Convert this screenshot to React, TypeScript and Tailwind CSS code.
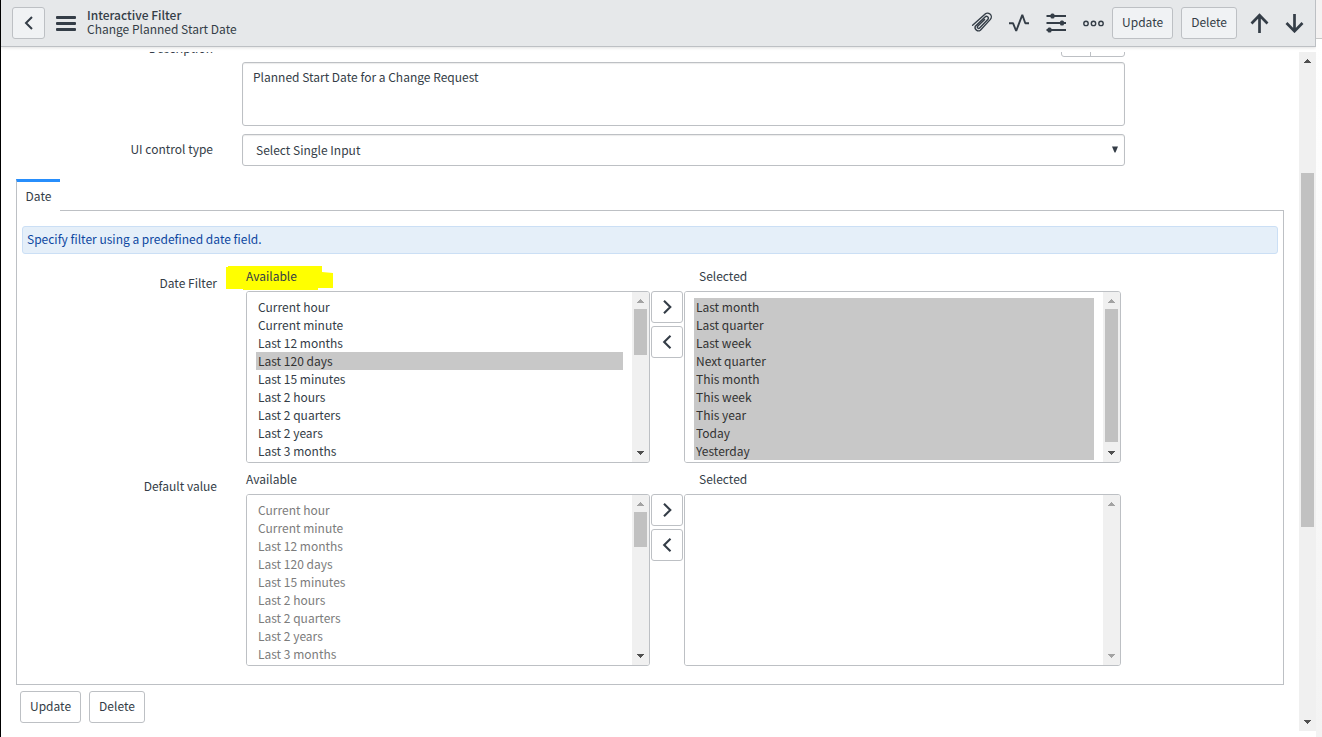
import React from 'react';

const availableDates = [
  'Current hour',
  'Current minute',
  'Last 12 months',
  'Last 120 days',
  'Last 15 minutes',
  'Last 2 hours',
  'Last 2 quarters',
  'Last 2 years',
  'Last 3 months',
];

const selectedDates = [
  'Last month',
  'Last quarter',
  'Last week',
  'Next quarter',
  'This month',
  'This week',
  'This year',
  'Today',
  'Yesterday',
];

interface ScrollbarProps {
  before?: number;
  thumb: number;
  after: number;
  topActive?: boolean;
  bottomActive?: boolean;
}

const Scrollbar: React.FC<ScrollbarProps> = ({ before = 0, thumb, after, topActive = false, bottomActive = true }) => (
  <div className="flex w-[17px] shrink-0 flex-col bg-[#f0f0f0]" aria-hidden="true">
    <svg className="h-[17px] w-[17px] shrink-0" viewBox="0 0 17 17" shapeRendering="crispEdges">
      <path d="M5 11V10H6V9H7V8H8V7H9V8H10V9H11V10H12V11Z" fill={topActive ? '#505050' : '#a3a3a3'} />
    </svg>
    <div style={{ flexGrow: before }} />
    <div className="mx-[2px] bg-[#c1c1c1]" style={{ flexGrow: thumb }} />
    <div style={{ flexGrow: after }} />
    <svg className="h-[17px] w-[17px] shrink-0" viewBox="0 0 17 17" shapeRendering="crispEdges">
      <path d="M5 6H12V7H11V8H10V9H9V10H8V9H7V8H6V7H5Z" fill={bottomActive ? '#505050' : '#a3a3a3'} />
    </svg>
  </div>
);

interface ListBoxProps {
  id: string;
  options: string[];
  selected?: string[];
  muted?: boolean;
  children: React.ReactNode;
}

const ListBox: React.FC<ListBoxProps> = ({ id, options, selected = [], muted = false, children }) => (
  <div className="flex h-[172px] overflow-hidden rounded-[3px] border border-[#bdc0c4] bg-white">
    <select
      id={id}
      multiple
      size={9}
      defaultValue={selected}
      className={`min-w-0 flex-1 overflow-hidden bg-white px-[9px] pt-[6px] outline-none ${
        muted ? 'text-[#7c7c7c]' : 'text-[#343d47]'
      }`}
    >
      {options.map((option) => (
        <option
          key={option}
          value={option}
          className="h-[18px] px-[2px] py-0 leading-4 checked:bg-[linear-gradient(#c8c8c8,#c8c8c8)] checked:[-webkit-text-fill-color:#323232]"
        >
          {option}
        </option>
      ))}
    </select>
    {children}
  </div>
);

const MoveButton: React.FC<{ label: string; direction: 'left' | 'right' }> = ({ label, direction }) => (
  <button
    type="button"
    aria-label={label}
    className="flex h-8 w-8 cursor-pointer items-center justify-center rounded-[3px] border border-[#bdc0c4] bg-white"
  >
    <svg width="10" height="14" viewBox="0 0 10 14" fill="none" stroke="#343d47" strokeWidth="2.1">
      <path d={direction === 'right' ? 'M2 0.8L8.3 7L2 13.2' : 'M8.5 0.8L2.2 7L8.5 13.2'} />
    </svg>
  </button>
);

interface SlushBucketProps {
  id: string;
  label: string;
  highlight?: boolean;
  available: React.ReactNode;
  selected: React.ReactNode;
}

const SlushBucket: React.FC<SlushBucketProps> = ({ id, label, highlight = false, available, selected }) => (
  <div className="flex" role="group" aria-labelledby={`${id}-label`}>
    <div id={`${id}-label`} className="w-[200px] shrink-0 pt-[10px] text-right leading-5">
      {label}
    </div>
    <div className="ml-[29px] mr-[162px] flex min-w-0 flex-1">
      <div className="min-w-0 flex-[404]">
        <div className="relative h-[28px] pt-[3px] leading-5">
          {highlight && (
            <svg className="absolute -left-5 top-[3px]" width="107" height="24" viewBox="0 0 107 24" aria-hidden="true">
              <path d="M0 1H2V0H96V6L107 7V22H92V24H17V23H0Z" fill="#ffff00" />
            </svg>
          )}
          <label htmlFor={`${id}-available`} className="relative">
            Available
          </label>
        </div>
        {available}
      </div>
      <div className="mx-px flex shrink-0 flex-col gap-[3px] pt-[28px]">
        <MoveButton label="Add" direction="right" />
        <MoveButton label="Remove" direction="left" />
      </div>
      <div className="min-w-0 flex-[437]">
        <div className="h-[28px] pl-[15px] pt-[3px] leading-5">
          <label htmlFor={`${id}-selected`}>Selected</label>
        </div>
        {selected}
      </div>
    </div>
  </div>
);

const ActionButton: React.FC<{ children: React.ReactNode; className: string }> = ({ children, className }) => (
  <button
    type="button"
    className={`h-8 cursor-pointer rounded-[3px] border border-[#bdc0c4] px-[9px] pb-[2px] leading-5 ${className}`}
  >
    {children}
  </button>
);

const iconButton = 'flex cursor-pointer items-center justify-center';

const Header: React.FC = () => (
  <header className="flex h-[47px] shrink-0 items-center border-b border-r border-[#bdc0c4] bg-[#e6e8ea] pl-[11px] pr-[10px] shadow-[0_1px_3px_rgba(0,0,0,0.12)]">
    <button
      type="button"
      aria-label="Back"
      className="flex h-8 w-[33px] cursor-pointer items-center justify-center rounded-[3px] border border-[#bdc0c4] bg-[#f0f2f4]"
    >
      <svg width="10" height="14" viewBox="0 0 10 14" fill="none" stroke="#343d47" strokeWidth="2">
        <path d="M8 1L2 7L8 13" />
      </svg>
    </button>
    <button type="button" aria-label="Additional actions" className={`${iconButton} ml-[11px]`}>
      <svg width="20" height="15" viewBox="0 0 20 15" fill="#343d47">
        <rect width="20" height="3" rx="1" />
        <rect y="6" width="20" height="3" rx="1" />
        <rect y="12" width="20" height="3" rx="1" />
      </svg>
    </button>
    <h1 className="ml-[11px] pb-[3px] leading-[14px]">
      <span className="block font-medium">Interactive Filter</span>
      <span className="block font-normal">Change Planned Start Date</span>
    </h1>
    <div className="ml-auto flex items-center">
      <button type="button" aria-label="Attachments" className={iconButton}>
        <svg width="22" height="22" viewBox="0 0 22 22" fill="none" stroke="#343d47" strokeWidth="1.4" strokeLinecap="round">
          <path d="M1.6 13.2L13.6 2.5A3.4 3.4 0 0 1 19.4 7.4L9.4 18.2A3.4 3.4 0 0 1 4.2 14.4L14 4.9A1.8 1.8 0 0 1 16.8 7.5L8.6 16A1.3 1.3 0 0 1 6.7 14.2L13.6 7.4" />
        </svg>
      </button>
      <button type="button" aria-label="Activity" className={`${iconButton} ml-[15px]`}>
        <svg width="22" height="20" viewBox="0 0 22 20" fill="none" stroke="#343d47" strokeWidth="1.9">
          <path d="M1 10.2H5L8.2 18L14.3 1.8L17.3 10.2H21" strokeLinejoin="bevel" />
        </svg>
      </button>
      <button type="button" aria-label="Personalize form" className={`${iconButton} ml-[15px]`}>
        <svg width="22" height="20" viewBox="0 0 22 20" fill="#343d47">
          <path d="M1.5 2H21V4H1.5ZM1.5 9H21V11H1.5ZM1.5 16H21V18H1.5Z" />
          <rect x="5.5" y="0.5" width="4" height="5" rx="1.5" />
          <rect x="15" y="7.5" width="4" height="5" rx="1.5" />
          <rect x="2.5" y="14.5" width="4" height="5" rx="1.5" />
        </svg>
      </button>
      <button type="button" aria-label="More options" className={`${iconButton} ml-[15px]`}>
        <svg width="22" height="8" viewBox="0 0 22 8" fill="none" stroke="#343d47" strokeWidth="1.4">
          <circle cx="4" cy="4.4" r="2.2" />
          <circle cx="11.5" cy="4.4" r="2.2" />
          <circle cx="19" cy="4.4" r="2.2" />
        </svg>
      </button>
      <div className="ml-2 flex gap-2">
        <ActionButton className="bg-[#f0f2f4]">Update</ActionButton>
        <ActionButton className="bg-[#f0f2f4]">Delete</ActionButton>
      </div>
      <button type="button" aria-label="Previous record" className={`${iconButton} ml-[13px]`}>
        <svg width="20" height="20" viewBox="0 0 20 20" fill="none" stroke="#343d47" strokeWidth="2.7">
          <path d="M9.5 20V2.5M1.5 10.5L9.5 2.3L17.5 10.5" />
        </svg>
      </button>
      <button type="button" aria-label="Next record" className={`${iconButton} ml-[15px]`}>
        <svg width="20" height="20" viewBox="0 0 20 20" fill="none" stroke="#343d47" strokeWidth="2.7">
          <path d="M9.5 1V18M1.5 10L9.5 18.2L17.5 10" />
        </svg>
      </button>
    </div>
  </header>
);

const App: React.FC = () => {
  return (
    <div className="flex h-screen overflow-hidden border-l border-black bg-white font-['Noto_Sans_CJK_SC','Source_Sans_Pro',sans-serif] text-[12px] text-[#343d47]">
      <div className="flex min-w-0 flex-1 flex-col">
        <Header />
        <div className="mt-[5px] flex min-h-0 flex-1">
          <main className="min-w-0 flex-1 overflow-hidden">
            {/* Description, scrolled halfway under the header */}
            <div className="-mt-[14px] flex h-[19px] justify-between pr-[174px]">
              <label htmlFor="description" className="w-[212px] text-right leading-5">
                Description
              </label>
              <div className="flex h-[19px] w-16 rounded-b-[3px] border border-[#bdc0c4]">
                <div className="w-[29px] border-r border-[#bdc0c4]" />
              </div>
            </div>
            <div className="mt-[5px] pl-[241px] pr-[174px]">
              <textarea
                id="description"
                defaultValue="Planned Start Date for a Change Request"
                className="block h-16 w-full resize-none rounded-[3px] border border-[#bdc0c4] px-[10px] py-1 leading-5 shadow-[inset_0_1px_1px_rgba(0,0,0,0.08)] outline-none"
              />
            </div>
            <div className="mt-2 flex items-center pr-[174px]">
              <label htmlFor="control-type" className="w-[212px] shrink-0 pb-[2px] text-right leading-5">
                UI control type
              </label>
              <div className="relative ml-[29px] min-w-0 flex-1">
                <select
                  id="control-type"
                  className="block h-8 w-full appearance-none rounded-[3px] border border-[#bdc0c4] bg-white px-[13px] leading-5 shadow-[inset_0_1px_1px_rgba(0,0,0,0.08)] outline-none"
                >
                  <option>Select Single Input</option>
                </select>
                <svg className="pointer-events-none absolute right-[7px] top-3" width="6" height="7" viewBox="0 0 6 7" aria-hidden="true">
                  <path d="M0 0.5H6L3.5 6.5H2.5Z" fill="#343d47" />
                </svg>
              </div>
            </div>

            <section className="mx-[15px] mt-[13px]">
              <div className="flex" role="tablist">
                <button
                  type="button"
                  role="tab"
                  aria-selected="true"
                  className="h-8 w-11 border-l border-t-[3px] border-l-[#bdc0c4] border-t-[#278efc] pb-[2px] text-center leading-5"
                >
                  Date
                </button>
                <div className="flex-1 border-b border-[#bdc0c4]" />
              </div>
              <div className="border border-t-0 border-[#bdc0c4] px-[5px] pb-[18px] pt-[15px]" role="tabpanel">
                <p className="h-7 rounded-[3px] border border-[#cbdff5] bg-[#e5eff9] px-1 leading-6 text-[#0d47a1]">
                  Specify filter using a predefined date field.
                </p>
                <div className="-mx-[5px] mt-[9px] flex flex-col gap-[3px]">
                  <SlushBucket
                    id="date-filter"
                    label="Date Filter"
                    highlight
                    available={
                      <ListBox id="date-filter-available" options={availableDates} selected={['Last 120 days']}>
                        <Scrollbar thumb={46} after={90} />
                      </ListBox>
                    }
                    selected={
                      <ListBox id="date-filter-selected" options={selectedDates} selected={selectedDates}>
                        <Scrollbar thumb={133} after={3} />
                      </ListBox>
                    }
                  />
                  <SlushBucket
                    id="default-value"
                    label="Default value"
                    available={
                      <ListBox id="default-value-available" options={availableDates} muted>
                        <Scrollbar thumb={35} after={101} />
                      </ListBox>
                    }
                    selected={
                      <ListBox id="default-value-selected" options={[]} muted>
                        <Scrollbar thumb={0} after={1} bottomActive={false} />
                      </ListBox>
                    }
                  />
                </div>
              </div>
            </section>

            <div className="mt-[6px] flex gap-2 pl-[19px]">
              <ActionButton className="bg-white">Update</ActionButton>
              <ActionButton className="bg-white">Delete</ActionButton>
            </div>
          </main>
          <div className="mb-[6px] flex">
            <Scrollbar before={104} thumb={354} after={187} topActive />
          </div>
        </div>
      </div>
      <div className="flex w-[6px] shrink-0 flex-col">
        <div className="h-[39px] border-b border-[#c8c8c8] bg-[#f4f2f2]" />
        <div className="flex-1 bg-gradient-to-b from-white to-[#f3f3f3]" />
      </div>
    </div>
  );
};

export default App;
